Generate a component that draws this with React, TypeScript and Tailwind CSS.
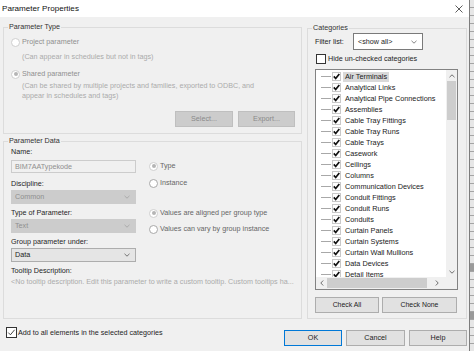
import type { ReactNode } from 'react'

const categories = [
  'Air Terminals',
  'Analytical Links',
  'Analytical Pipe Connections',
  'Assemblies',
  'Cable Tray Fittings',
  'Cable Tray Runs',
  'Cable Trays',
  'Casework',
  'Ceilings',
  'Columns',
  'Communication Devices',
  'Conduit Fittings',
  'Conduit Runs',
  'Conduits',
  'Curtain Panels',
  'Curtain Systems',
  'Curtain Wall Mullions',
  'Data Devices',
  'Detail Items',
]

function Chevron({ color = '#555', dir = 'down' }: { color?: string; dir?: 'down' | 'up' | 'left' | 'right' }) {
  const paths = {
    down: 'M0.5 0.8 L3 3.2 L5.5 0.8',
    up: 'M0.5 3.2 L3 0.8 L5.5 3.2',
    left: 'M3.2 0.5 L0.8 3 L3.2 5.5',
    right: 'M0.8 0.5 L3.2 3 L0.8 5.5',
  }
  const vertical = dir === 'down' || dir === 'up'
  return (
    <svg width={vertical ? 6 : 4} height={vertical ? 4 : 6} viewBox={vertical ? '0 0 6 4' : '0 0 4 6'}>
      <path d={paths[dir]} fill="none" stroke={color} strokeWidth="0.9" />
    </svg>
  )
}

function Radio({ checked, tone }: { checked?: boolean; tone: 'light' | 'mid' }) {
  const border = tone === 'light' ? 'border-[#cfcfcf]' : 'border-[#a8a8a8]'
  return (
    <span className={`flex h-[9px] w-[9px] shrink-0 items-center justify-center rounded-full border bg-white ${border}`}>
      {checked ? <span className="h-[4px] w-[4px] rounded-full bg-[#b5b5b5]" /> : null}
    </span>
  )
}

function Legend({ children }: { children: ReactNode }) {
  return (
    <span className="-mt-[6px] ml-[4px] block h-[10px] w-fit bg-[#f0f0f0] px-[1px] text-[#333]">{children}</span>
  )
}

function WinButton({ children, className = '', disabled, primary }: { children: ReactNode; className?: string; disabled?: boolean; primary?: boolean }) {
  const look = disabled
    ? 'border-[#bfbfbf] bg-[#cccccc] text-[#8a8a8a]'
    : primary
      ? 'border-[#0078d7] bg-[#e1e1e1] text-[#222]'
      : 'border-[#adadad] bg-[#e1e1e1] text-[#222]'
  return (
    <div className={`flex h-[16px] items-center justify-center border ${look} ${className}`}>{children}</div>
  )
}

function Combo({ value, disabled }: { value: string; disabled?: boolean }) {
  return (
    <div
      className={`mt-[1px] flex h-[14px] items-center justify-between border pl-[3px] pr-[5px] ${
        disabled ? 'border-[#cccccc] bg-[#cccccc] text-[#8f8f8f]' : 'border-[#adadad] bg-[#e5e5e5] text-[#222]'
      }`}
    >
      <span>{value}</span>
      <Chevron color={disabled ? '#a8a8a8' : '#666'} />
    </div>
  )
}

function ListCheck() {
  return (
    <svg width="9" height="9" viewBox="0 0 9 9" className="shrink-0">
      <rect x="0.5" y="0.5" width="8" height="8" fill="white" stroke="#c8c8c8" />
      <path d="M1.8 4.4 L3.7 6.5 L7.3 1.9" fill="none" stroke="#111" strokeWidth="1.7" />
    </svg>
  )
}

function CategoryList() {
  return (
    <div className="ml-[7px] mt-[5px] flex h-[221px] w-[143px] flex-col border border-[#828282] bg-white">
      <div className="flex h-[207px]">
        <div className="flex flex-1 flex-col overflow-hidden pt-[1px] text-[7.3px] text-[#1a1a1a]">
          {categories.map((name, i) => (
            <div key={name} className="flex h-[11px] shrink-0 items-center pl-[5px]">
              <span className="h-0 w-[10px] border-t border-[#a8a8a8]" />
              <span className="ml-[1px]">
                <ListCheck />
              </span>
              <span className={`ml-[2px] whitespace-nowrap px-[2px] leading-[10px] ${i === 0 ? 'bg-[#d9d9d9]' : ''}`}>{name}</span>
            </div>
          ))}
        </div>
        <div className="flex w-[11px] flex-col bg-[#f0f0f0]">
          <div className="flex h-[11px] items-center justify-center">
            <Chevron dir="up" color="#606060" />
          </div>
          <div className="mx-[1px] h-[39px] bg-[#cdcdcd]" />
          <div className="flex-1" />
          <div className="flex h-[11px] items-center justify-center">
            <Chevron color="#606060" />
          </div>
        </div>
      </div>
      <div className="flex h-[12px] bg-[#f0f0f0]">
        <div className="flex w-[11px] items-center justify-center">
          <Chevron dir="left" color="#606060" />
        </div>
        <div className="my-[1px] w-[100px] bg-[#cdcdcd]" />
        <div className="flex flex-1 items-center justify-center">
          <Chevron dir="right" color="#606060" />
        </div>
        <div className="w-[11px] bg-[#f0f0f0]" />
      </div>
    </div>
  )
}

function TitleBar() {
  return (
    <div className="flex h-[17px] shrink-0 items-center justify-between bg-white pl-[2px] pr-[6px]">
      <span className="text-[8.1px] text-[#111]">Parameter Properties</span>
      <svg width="8" height="8" viewBox="0 0 8 8">
        <path d="M0.5 0.5 L7.5 7.5 M7.5 0.5 L0.5 7.5" stroke="#333" strokeWidth="0.8" />
      </svg>
    </div>
  )
}

function ParameterTypeBox() {
  return (
    <div className="flex h-[107px] flex-col border border-[#dcdcdc]">
      <Legend>Parameter Type</Legend>
      <div className="mt-[5px] flex h-[10px] items-center gap-[2px] pl-[7px] text-[#8f8f8f]">
        <Radio tone="light" />
        <span>Project parameter</span>
      </div>
      <div className="mt-[5px] h-[10px] pl-[18px] text-[#ababab]">(Can appear in schedules but not in tags)</div>
      <div className="mt-[7px] flex h-[10px] items-center gap-[2px] pl-[7px] text-[#8f8f8f]">
        <Radio tone="light" checked />
        <span>Shared parameter</span>
      </div>
      <div className="mt-[2px] pl-[18px] text-[#ababab]">
        <div className="h-[10px]">(Can be shared by multiple projects and families, exported to ODBC, and</div>
        <div className="h-[10px]">appear in schedules and tags)</div>
      </div>
      <div className="mt-[10px] flex justify-end gap-[5px] pr-[6px]">
        <WinButton disabled className="w-[58px]">Select...</WinButton>
        <WinButton disabled className="w-[57px]">Export...</WinButton>
      </div>
    </div>
  )
}

function ParameterDataBox() {
  return (
    <div className="mt-[7px] flex h-[178px] flex-col border border-[#dcdcdc]">
      <Legend>Parameter Data</Legend>
      <div className="mt-[1px] flex pl-[7px]">
        <div className="flex w-[125px] flex-col">
          <div className="h-[10px]">Name:</div>
          <div className="mt-[3px] flex h-[13px] items-center border border-[#cccccc] bg-[#f0f0f0] pl-[3px] text-[#8f8f8f]">
            BIM7AATypekode
          </div>
          <div className="mt-[6px] h-[10px]">Discipline:</div>
          <Combo value="Common" disabled />
          <div className="mt-[4px] h-[10px]">Type of Parameter:</div>
          <Combo value="Text" disabled />
          <div className="mt-[4px] h-[10px]">Group parameter under:</div>
          <Combo value="Data" />
          <div className="mt-[4px] h-[10px]">Tooltip Description:</div>
        </div>
        <div className="ml-[13px] flex flex-col text-[#666]">
          <div className="mt-[14px] flex h-[10px] items-center gap-[2px]">
            <Radio tone="light" checked />
            <span>Type</span>
          </div>
          <div className="mt-[7px] flex h-[10px] items-center gap-[2px]">
            <Radio tone="mid" />
            <span>Instance</span>
          </div>
          <div className="mt-[20px] flex h-[10px] items-center gap-[2px]">
            <Radio tone="light" checked />
            <span>Values are aligned per group type</span>
          </div>
          <div className="mt-[6px] flex h-[10px] items-center gap-[2px]">
            <Radio tone="mid" />
            <span>Values can vary by group instance</span>
          </div>
        </div>
      </div>
      <div className="mt-[1px] h-[10px] whitespace-nowrap pl-[7px] text-[#ababab]">
        &lt;No tooltip description. Edit this parameter to write a custom tooltip. Custom tooltips ha...
      </div>
    </div>
  )
}

function CategoriesBox() {
  return (
    <div className="ml-[5px] mt-[1px] flex h-[291px] w-[160px] flex-col border border-[#dcdcdc]">
      <Legend>Categories</Legend>
      <div className="flex h-[17px] items-center pl-[7px]">
        <span className="w-[38px]">Filter list:</span>
        <div className="flex h-[17px] w-[70px] items-center justify-between border border-[#7a7a7a] bg-white pl-[4px] pr-[5px]">
          <span>&lt;show all&gt;</span>
          <Chevron color="#777" />
        </div>
      </div>
      <div className="mt-[4px] flex h-[10px] items-center gap-[2px] pl-[8px]">
        <span className="h-[10px] w-[10px] border border-[#333] bg-white" />
        <span>Hide un-checked categories</span>
      </div>
      <CategoryList />
      <div className="ml-[7px] mt-[7px] flex gap-[3px] text-[6.9px]">
        <WinButton className="w-[64px]">Check All</WinButton>
        <WinButton className="w-[75px]">Check None</WinButton>
      </div>
    </div>
  )
}

function GridStrip() {
  return (
    <div className="flex w-[5px] flex-col border-l border-[#7d7d7d] bg-[#e7e7e7]">
      {Array.from({ length: 44 }).map((_, i) => (
        <div key={i} className={`h-[8px] shrink-0 border-b border-[#a5a5a5] ${i === 33 || i === 39 ? 'bg-[#9a9a9a]' : ''}`} />
      ))}
    </div>
  )
}

export default function App() {
  return (
    <div className="flex h-[351px] w-[474px] overflow-hidden font-['Liberation_Sans',Arial,sans-serif] text-[7.2px] leading-[10px] text-[#1e1e1e]">
      <div className="flex w-[469px] flex-col bg-[#f0f0f0]">
        <TitleBar />
        <div className="flex pt-[10px]">
          <div className="ml-[3px] flex w-[299px] flex-col">
            <ParameterTypeBox />
            <ParameterDataBox />
          </div>
          <CategoriesBox />
        </div>
        <div className="flex items-start">
          <div className="ml-[6px] mt-[8px] flex h-[11px] items-center gap-[1px]">
            <svg width="11" height="11" viewBox="0 0 11 11">
              <rect x="0.5" y="0.5" width="10" height="10" fill="white" stroke="#333" />
              <path d="M2.3 5.6 L4.4 7.8 L8.6 2.8" fill="none" stroke="#333" strokeWidth="0.9" />
            </svg>
            <span>Add to all elements in the selected categories</span>
          </div>
          <div className="ml-auto mr-[2px] mt-[11px] flex gap-[4px]">
            <WinButton primary className="w-[58px]">OK</WinButton>
            <WinButton className="w-[59px]">Cancel</WinButton>
            <WinButton className="w-[58px]">Help</WinButton>
          </div>
        </div>
      </div>
      <GridStrip />
    </div>
  )
}
